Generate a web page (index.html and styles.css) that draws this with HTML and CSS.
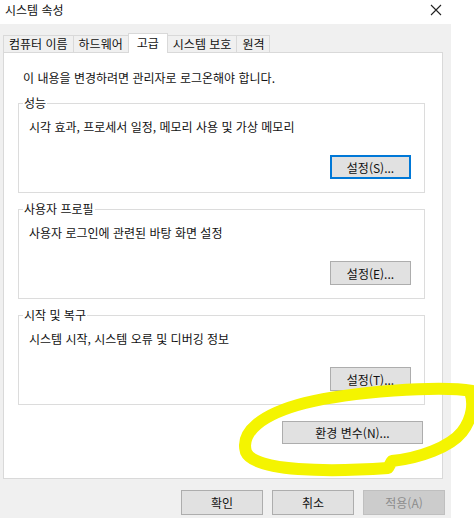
FILE: index.html
```html
<!DOCTYPE html>
<html lang="ko">
<head>
<meta charset="utf-8">
<title>시스템 속성</title>
<link rel="stylesheet" href="styles.css">
</head>
<body>
<div class="window">
  <div class="titlebar">
    <span class="title">시스템 속성</span>
    <svg class="close" width="12" height="12" viewBox="0 0 12 12"><path d="M1 1 L11 11 M11 1 L1 11" stroke="#222" stroke-width="1.1" fill="none"/></svg>
  </div>
  <div class="body">
    <div class="tabs">
      <div class="tab first">컴퓨터 이름</div>
      <div class="tab">하드웨어</div>
      <div class="tab active">고급</div>
      <div class="tab">시스템 보호</div>
      <div class="tab">원격</div>
    </div>
    <div class="panel">
      <p class="info">이 내용을 변경하려면 관리자로 로그온해야 합니다.</p>
      <fieldset class="group">
        <legend>성능</legend>
        <p class="desc">시각 효과, 프로세서 일정, 메모리 사용 및 가상 메모리</p>
        <div class="row"><button class="btn default">설정(S)...</button></div>
      </fieldset>
      <fieldset class="group">
        <legend>사용자 프로필</legend>
        <p class="desc">사용자 로그인에 관련된 바탕 화면 설정</p>
        <div class="row"><button class="btn">설정(E)...</button></div>
      </fieldset>
      <fieldset class="group">
        <legend>시작 및 복구</legend>
        <p class="desc">시스템 시작, 시스템 오류 및 디버깅 정보</p>
        <div class="row"><button class="btn">설정(T)...</button></div>
      </fieldset>
      <div class="env-row"><button class="btn env">환경 변수(N)...</button></div>
    </div>
    <div class="footer">
      <button class="btn foot">확인</button>
      <button class="btn foot">취소</button>
      <button class="btn foot" disabled>적용(A)</button>
    </div>
  </div>
</div>
<svg class="highlight" width="474" height="518" viewBox="0 0 474 518">
  <path d="M472 391 C440 385 350 392 305 403 C262 414 240 432 246 452 C254 472 330 472 388 468 L392 461 C420 458 450 447 462 432 C473 418 474 402 470 392" stroke="#f4f400" stroke-width="12" fill="none" stroke-linecap="round" stroke-linejoin="round"/>
</svg>
</body>
</html>
```

FILE: styles.css
```css
* { box-sizing: border-box; }
html, body { margin: 0; padding: 0; background: #ffffff; }
body {
  font-family: "Noto Sans CJK KR", "Malgun Gothic", sans-serif;
  font-size: 12px;
  color: #111;
  width: 474px;
  height: 518px;
  overflow: hidden;
  position: relative;
}
.window { width: 451px; }
.titlebar {
  height: 24px;
  background: #fff;
  display: flex;
  justify-content: space-between;
  align-items: flex-start;
  padding: 0 9px 0 5px;
}
.title { font-size: 12px; line-height: 20px; }
.close { margin-top: 4px; }
.body {
  background: #f0f0f0;
  height: 494px;
  padding-top: 9px;
}
.tabs {
  display: flex;
  align-items: flex-end;
  margin-left: 3px;
  position: relative;
  z-index: 2;
}
.tab {
  border: 1px solid #d9d9d9;
  border-bottom: none;
  border-left: none;
  line-height: 16px;
  padding: 0 5px;
  background: #f0f0f0;
  white-space: nowrap;
}
.tab.first { border-left: 1px solid #d9d9d9; }
.tab.active {
  background: #fff;
  line-height: 18px;
  padding: 0 8px 1px;
  margin-bottom: -1px;
  margin-left: -1px;
  border-left: 1px solid #d9d9d9;
}
.panel {
  margin-left: 3px;
  width: 440px;
  height: 427px;
  background: #fff;
  border: 1px solid #d9d9d9;
  position: relative;
  z-index: 1;
  display: flex;
  flex-direction: column;
}
.info { margin: 17px 0 0 19px; line-height: 16px; }
.group {
  margin: 8px 17px 0 14px;
  border: 1px solid #dcdcdc;
  padding: 0 0 13px 0;
  min-width: 0;
}
.group:first-of-type { margin-top: 9px; }
.group legend {
  padding: 0 1px;
  margin-left: 4px;
  line-height: 16px;
}
.desc { margin: 8px 0 0 10px; line-height: 16px; }
.row {
  display: flex;
  justify-content: flex-end;
  margin: 20px 13px 0 0;
}
.btn {
  font-family: inherit;
  font-size: 12px;
  color: #111;
  background: #e1e1e1;
  border: 1px solid #adadad;
  width: 81px;
  height: 24px;
  padding: 0;
}
.btn.default {
  border-color: #0078d7;
  box-shadow: inset 0 0 0 1px #0078d7;
}
.env-row {
  display: flex;
  justify-content: flex-end;
  margin: 16px 19px 0 0;
}
.btn.env { width: 141px; height: 23px; }
.footer {
  display: flex;
  justify-content: flex-end;
  gap: 9px;
  margin-top: 11px;
  padding-right: 6px;
}
.btn.foot { width: 82px; height: 25px; }
.btn:disabled {
  background: #cccccc;
  border-color: #bfbfbf;
  color: #8c8c8c;
}
.highlight {
  position: absolute;
  left: 0;
  top: 0;
  pointer-events: none;
  z-index: 5;
}
```
